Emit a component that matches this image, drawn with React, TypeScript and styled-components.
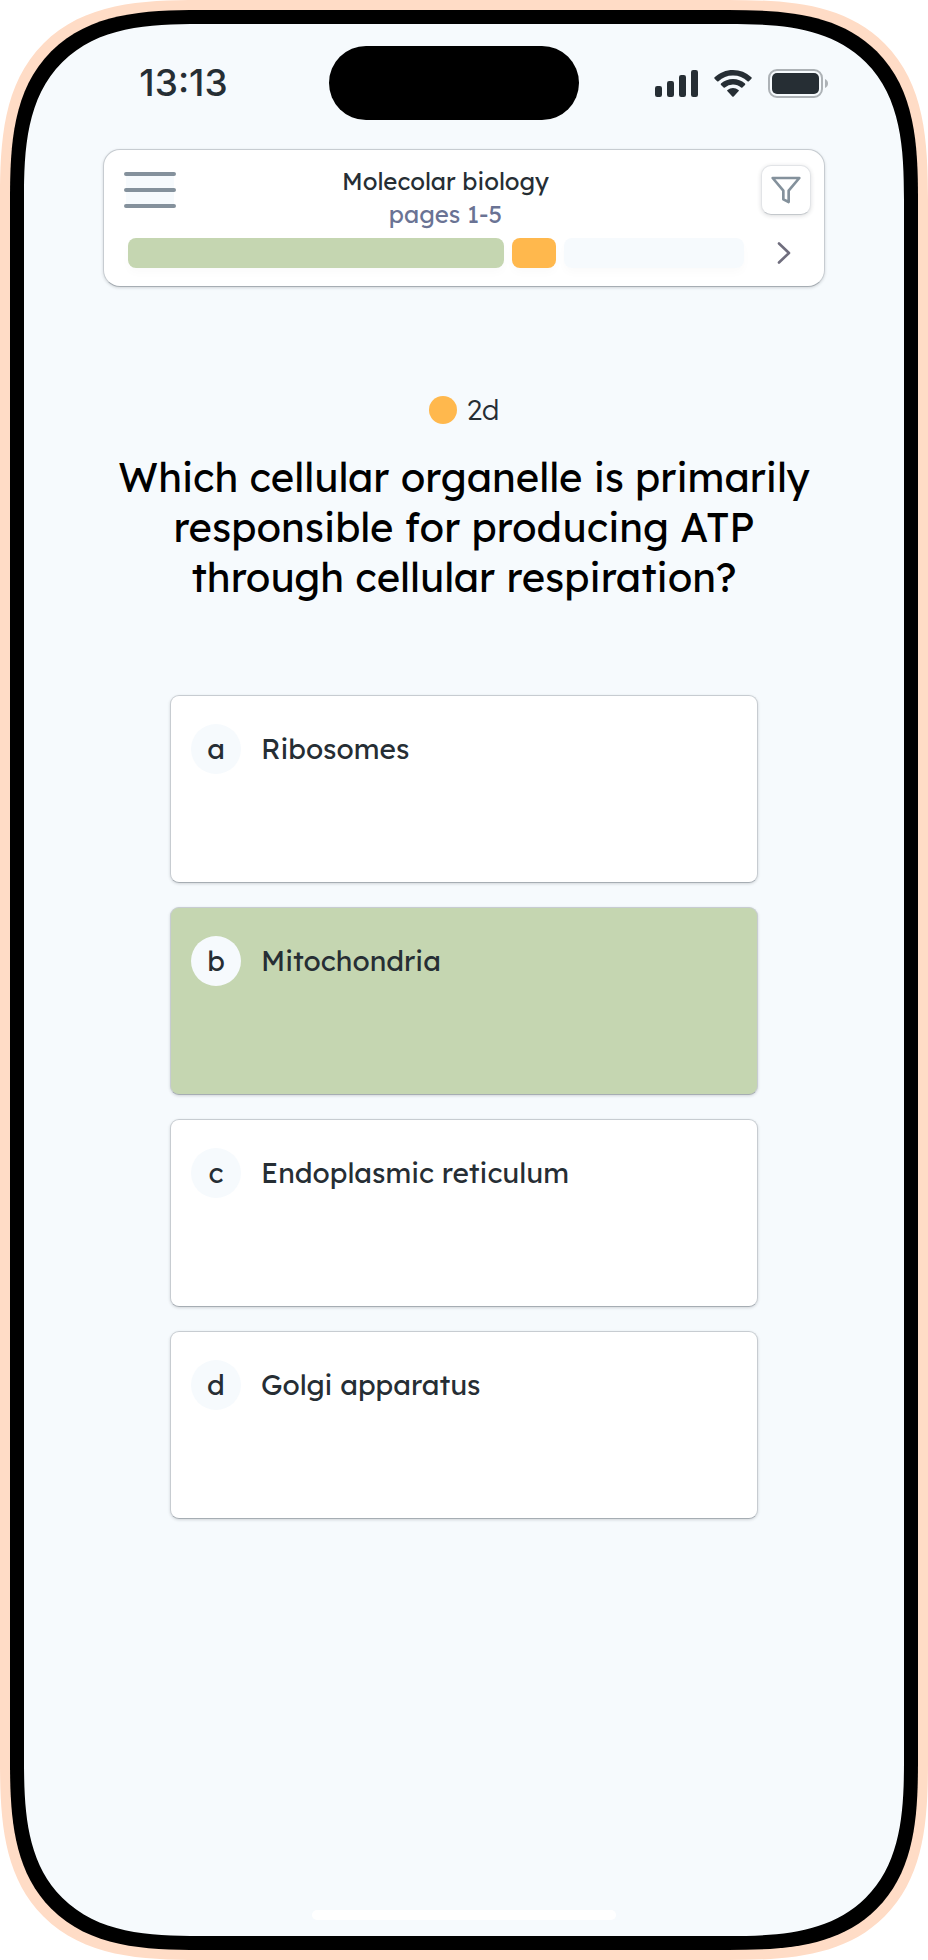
import React, { useState } from "react";
import styled, { createGlobalStyle } from "styled-components";

const color = {
  page: "#f6fafd",
  ink: "#262e34",
  slate: "#84919c",
  muted: "#6a7394",
  green: "#c5d6b1",
  amber: "#ffb84d",
  peach: "#ffdcc6",
};

const GlobalStyle = createGlobalStyle`
  *, *::before, *::after { box-sizing: border-box; }
  body {
    margin: 0;
    background: #fff;
    color: ${color.ink};
    font-family: Lexend, Inter, "Liberation Sans", sans-serif;
    font-feature-settings: "cv11";
  }
  button {
    border: 0;
    padding: 0;
    background: none;
    color: inherit;
    font: inherit;
    font-feature-settings: inherit;
    cursor: pointer;
  }
`;

const Shell = styled.div`
  display: flex;
  min-height: 100vh;
  padding: 10px;
  background: ${color.peach};
  border-radius: 148px;
  @supports (corner-shape: squircle) {
    border-radius: 200px;
    corner-shape: superellipse(1.5);
  }
`;

const Bezel = styled.div`
  display: flex;
  flex: 1;
  padding: 14px;
  background: #000;
  border-radius: 138px;
  @supports (corner-shape: squircle) {
    border-radius: 190px;
    corner-shape: superellipse(1.5);
  }
`;

const Screen = styled.div`
  display: flex;
  flex: 1;
  flex-direction: column;
  min-width: 0;
  background: ${color.page};
  border-radius: 124px;
  @supports (corner-shape: squircle) {
    border-radius: 176px;
    corner-shape: superellipse(1.5);
  }
`;

const StatusBar = styled.div`
  display: grid;
  grid-template-columns: 1fr 250px 1fr;
  align-items: center;
  padding: 22px 76px 0 56px;
`;

const Time = styled.time`
  justify-self: center;
  padding-right: 42px;
  font-family: Inter, sans-serif;
  font-size: 37px;
  font-weight: 500;
  line-height: 44px;
`;

const Island = styled.div`
  height: 74px;
  background: #000;
  border-radius: 37px;
`;

const StatusIcons = styled.div`
  display: flex;
  justify-content: flex-end;
  gap: 16px;
`;

const TopCard = styled.header`
  display: grid;
  gap: 7px;
  margin: 29px 79px 0;
  padding: 15px 13px 18px 20px;
  background: #fff;
  border: 1px solid #c7ccd1;
  border-bottom-color: #a6adb3;
  border-radius: 17px;
  box-shadow: 0 1px 3px rgba(38, 46, 52, 0.18);
`;

const TitleRow = styled.div`
  display: grid;
  grid-template-columns: 52px 1fr 50px;
  align-items: start;
`;

const MenuButton = styled.button`
  display: flex;
  margin-top: 7px;
`;

const Titles = styled.div`
  padding-right: 46px;
  text-align: center;
  font-size: 24px;
  line-height: 33px;
`;

const DeckTitle = styled.h1`
  margin: 0;
  font: inherit;
`;

const DeckPages = styled.p`
  margin: 0;
  color: ${color.muted};
`;

const FilterButton = styled.button`
  display: grid;
  place-items: center;
  height: 50px;
  background: #fff;
  border: 1px solid #e2e4e7;
  border-bottom-color: #c4c8cc;
  border-radius: 10px;
  box-shadow: 0 1px 4px rgba(38, 46, 52, 0.16);
`;

const ProgressRow = styled.div`
  display: flex;
  align-items: center;
  padding-left: 4px;
`;

const Progress = styled.div`
  display: flex;
  flex: 1;
  gap: 8px;
`;

const Segment = styled.span<{ $share: number; $tone: string }>`
  flex: ${(p) => p.$share} 1 0;
  height: 30px;
  background: ${(p) => p.$tone};
  border-radius: 8px;
  box-shadow: 0 5px 10px rgba(38, 46, 52, 0.02);
`;

const NextButton = styled.button`
  display: grid;
  place-items: center;
  width: 30px;
  height: 30px;
  margin: 0 12px 0 25px;
`;

const Main = styled.main`
  display: flex;
  flex: 1;
  flex-direction: column;
  align-items: center;
  padding: 106px 79px 0;
`;

const DueTag = styled.div`
  display: flex;
  align-items: center;
  gap: 10px;
  font-size: 28px;
  font-weight: 300;
  line-height: 34px;
`;

const DueDot = styled.span`
  width: 28px;
  height: 28px;
  background: ${color.amber};
  border-radius: 50%;
`;

const Question = styled.h2`
  max-width: 712px;
  margin: 25px 0 0;
  color: #000;
  font-size: 40px;
  font-weight: 400;
  line-height: 50px;
  text-align: center;
`;

const AnswerList = styled.ol`
  display: grid;
  gap: 24px;
  width: 100%;
  max-width: 588px;
  margin: 93px 0 0;
  padding: 0;
  list-style: none;
`;

const AnswerButton = styled.button<{ $picked: boolean }>`
  display: flex;
  align-items: flex-start;
  gap: 20px;
  width: 100%;
  min-height: 188px;
  padding: 28px 20px;
  background: ${(p) => (p.$picked ? color.green : "#fff")};
  border: 1px solid #c7ccd1;
  border-bottom-color: #a6adb3;
  border-radius: 9px;
  box-shadow: 0 1px 3px rgba(38, 46, 52, 0.18);
  font-size: 28px;
  line-height: 50px;
  text-align: left;
`;

const Letter = styled.span`
  flex: none;
  width: 50px;
  height: 50px;
  background: ${color.page};
  border-radius: 50%;
  text-align: center;
`;

const HomeIndicator = styled.div`
  align-self: center;
  width: 304px;
  height: 10px;
  margin: 40px 0 16px;
  background: #fff;
  border-radius: 5px;
`;

const SignalIcon = () => (
  <svg width="43" height="28" viewBox="0 0 43 28" fill={color.ink} aria-hidden="true">
    <rect x="0" y="17" width="7" height="11" rx="2.2" />
    <rect x="12" y="12" width="7" height="16" rx="2.2" />
    <rect x="24" y="6" width="7" height="22" rx="2.2" />
    <rect x="36" y="1" width="7" height="27" rx="2.2" />
  </svg>
);

const WifiIcon = () => (
  <svg width="38" height="28" viewBox="0 0 38 28" fill={color.ink} aria-hidden="true">
    <path d="M19 1C12 1 5.600 3.700.600 8.300a1 1 0 0 0 0 1.400l2.500 2.500a1 1 0 0 0 1.400 0A21 21 0 0 1 19 6.600a21 21 0 0 1 14.500 5.600 1 1 0 0 0 1.400 0l2.500-2.500a1 1 0 0 0 0-1.400A27 27 0 0 0 19 1Z" />
    <path d="M19 10a18 18 0 0 0-12 4.600 1 1 0 0 0 0 1.400l2.600 2.500a1 1 0 0 0 1.300 0A12.200 12.200 0 0 1 19 15.500c3 0 5.900 1.100 8.100 3a1 1 0 0 0 1.300 0L31 16a1 1 0 0 0 0-1.400A18 18 0 0 0 19 10Z" />
    <path d="M19 19a9 9 0 0 0-5.500 1.900.900.900 0 0 0 0 1.400l4.800 5.100a1 1 0 0 0 1.400 0l4.800-5.100a.900.900 0 0 0 0-1.400A9 9 0 0 0 19 19Z" />
  </svg>
);

const BatteryIcon = () => (
  <svg width="60" height="29" viewBox="0 0 60 29" aria-hidden="true">
    <rect x="1" y="1" width="53" height="27" rx="8" fill="none" stroke="#adb2b6" strokeWidth="2" />
    <rect x="4" y="4" width="47" height="21" rx="5" fill={color.ink} />
    <path d="M57 10v9c1.800-.8 3-2.500 3-4.500s-1.200-3.700-3-4.500Z" fill="#adb2b6" />
  </svg>
);

const MenuIcon = () => (
  <svg width="52" height="36" viewBox="0 0 52 36" aria-hidden="true">
    <path d="M2 2h48v32H2Z" fill={color.page} />
    <path d="M2 2h48M2 18h48M2 34h48" stroke={color.slate} strokeWidth="4" strokeLinecap="round" />
  </svg>
);

const FunnelIcon = () => (
  <svg width="32" height="32" viewBox="0 0 24 24" fill="none" stroke={color.slate} strokeWidth="2" strokeLinejoin="round" aria-hidden="true">
    <path d="M22 3H2l8 9.460V19l4 2v-8.540L22 3Z" />
  </svg>
);

const ChevronIcon = () => (
  <svg width="14" height="22" viewBox="0 0 14 22" fill="none" stroke="#6f6d7d" strokeWidth="2.600" strokeLinecap="round" strokeLinejoin="round" aria-hidden="true">
    <path d="m2 1.500 10 9.500-10 9.500" />
  </svg>
);

const segments = [
  { name: "known", share: 376, tone: color.green },
  { name: "learning", share: 44, tone: color.amber },
  { name: "new", share: 180, tone: color.page },
];

const answers = [
  { letter: "a", text: "Ribosomes" },
  { letter: "b", text: "Mitochondria" },
  { letter: "c", text: "Endoplasmic reticulum" },
  { letter: "d", text: "Golgi apparatus" },
];

export default function App() {
  const [picked, setPicked] = useState("b");

  return (
    <>
      <GlobalStyle />
      <Shell>
        <Bezel>
          <Screen>
            <StatusBar>
              <Time>13:13</Time>
              <Island />
              <StatusIcons>
                <SignalIcon />
                <WifiIcon />
                <BatteryIcon />
              </StatusIcons>
            </StatusBar>
            <TopCard>
              <TitleRow>
                <MenuButton type="button" aria-label="Menu">
                  <MenuIcon />
                </MenuButton>
                <Titles>
                  <DeckTitle>Molecolar biology</DeckTitle>
                  <DeckPages>pages 1-5</DeckPages>
                </Titles>
                <FilterButton type="button" aria-label="Filter">
                  <FunnelIcon />
                </FilterButton>
              </TitleRow>
              <ProgressRow>
                <Progress>
                  {segments.map((s) => (
                    <Segment key={s.name} $share={s.share} $tone={s.tone} />
                  ))}
                </Progress>
                <NextButton type="button" aria-label="Next">
                  <ChevronIcon />
                </NextButton>
              </ProgressRow>
            </TopCard>
            <Main>
              <DueTag>
                <DueDot />
                2d
              </DueTag>
              <Question>
                Which cellular organelle is primarily responsible for producing ATP through cellular respiration?
              </Question>
              <AnswerList>
                {answers.map((a) => (
                  <li key={a.letter}>
                    <AnswerButton
                      type="button"
                      $picked={picked === a.letter}
                      aria-pressed={picked === a.letter}
                      onClick={() => setPicked(a.letter)}
                    >
                      <Letter>{a.letter}</Letter>
                      <span>{a.text}</span>
                    </AnswerButton>
                  </li>
                ))}
              </AnswerList>
            </Main>
            <HomeIndicator />
          </Screen>
        </Bezel>
      </Shell>
    </>
  );
}
